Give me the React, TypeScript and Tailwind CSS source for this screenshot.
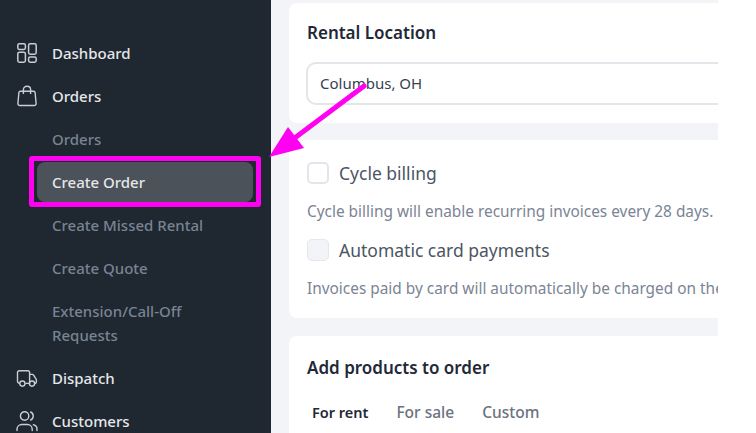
const font = { fontFamily: '"Noto Sans", "Liberation Sans", sans-serif' }

function DashboardIcon() {
  return (
    <svg width="22" height="22" viewBox="0 0 22 22" fill="none" stroke="currentColor" strokeWidth="1.5">
      <rect x="1.8" y="1.8" width="7.6" height="5.6" rx="1.6" />
      <rect x="12.6" y="1.8" width="7.6" height="10.4" rx="1.6" />
      <rect x="1.8" y="10.2" width="7.6" height="10" rx="1.6" />
      <rect x="12.6" y="15" width="7.6" height="5.2" rx="1.6" />
    </svg>
  )
}

function BagIcon() {
  return (
    <svg width="22" height="22" viewBox="0 0 22 22" fill="none" stroke="currentColor" strokeWidth="1.4" strokeLinejoin="round">
      <path d="M4.400 6.200h13.200c.8 0 1.400.6 1.500 1.300l1 11c.1 1-.7 2-1.800 2H3.700c-1.100 0-1.900-1-1.800-2l1-11c.1-.7.7-1.300 1.500-1.300z" />
      <path d="M7.400 9V4.600C7.400 2.600 9 1.200 11 1.200s3.600 1.400 3.600 3.400V9" />
    </svg>
  )
}

function TruckIcon() {
  return (
    <svg width="22" height="22" viewBox="0 0 22 22" fill="none" stroke="currentColor" strokeWidth="1.4" strokeLinejoin="round">
      <path d="M3.600 16.400C2.400 16.200 1.500 15.200 1.500 14V5.600c0-1 .8-1.800 1.800-1.800h8.500c1 0 1.800.8 1.800 1.800v10.800H9.400" />
      <path d="M13.600 7.400h2.600c.6 0 1.100.3 1.400.8l2.500 4c.2.3.3.6.3 1v1.600c0 1.200-.8 1.800-1.800 2" />
      <circle cx="6.400" cy="16.600" r="2.600" />
      <circle cx="16" cy="16.600" r="2.600" />
    </svg>
  )
}

function UsersIcon() {
  return (
    <svg width="22" height="22" viewBox="0 0 22 22" fill="none" stroke="currentColor" strokeWidth="1.4" strokeLinecap="round">
      <circle cx="8.600" cy="6" r="4.200" />
      <path d="M14.600 2c1.600.6 2.600 2.200 2.600 4s-1 3.400-2.600 4" />
      <path d="M1 20.600v-1.400c0-2.600 2.100-4.700 4.700-4.700h5.800c2.600 0 4.700 2.100 4.700 4.700v1.400" />
      <path d="M17.400 14.800c2.100.5 3.600 2.300 3.600 4.400v1.400" />
    </svg>
  )
}

function MainItem({ icon, label }: { icon: React.ReactNode; label: string }) {
  return (
    <div className="flex h-10 shrink-0 items-center text-[15px] font-medium text-[#e5e7eb]">
      <span className="ml-[16px] w-[36px] text-[#c9ced6]">{icon}</span>
      {label}
    </div>
  )
}

function SubItem({ label, active }: { label: string; active?: boolean }) {
  return (
    <div
      className={
        active
          ? 'ml-[37px] flex h-10 w-[216px] shrink-0 items-center rounded-lg bg-[#4b5259] px-[15px] text-[15px] font-medium text-[#e5e7eb]'
          : 'ml-[37px] flex h-10 w-[216px] shrink-0 items-center px-[15px] text-[15px] font-medium text-[#788494]'
      }
    >
      {label}
    </div>
  )
}

export default function App() {
  return (
    <div style={font} className="relative flex h-[433px] w-[756px] overflow-hidden bg-white">
      <aside className="flex h-full w-[271px] shrink-0 flex-col gap-[3px] bg-[#1f2730] pt-[33px]">
        <MainItem icon={<DashboardIcon />} label="Dashboard" />
        <MainItem icon={<BagIcon />} label="Orders" />
        <SubItem label="Orders" />
        <SubItem label="Create Order" active />
        <SubItem label="Create Missed Rental" />
        <SubItem label="Create Quote" />
        <div className="ml-[37px] w-[216px] shrink-0 px-[15px] py-2 text-[15px] leading-6 font-medium text-[#788494]">
          Extension/Call-Off Requests
        </div>
        <MainItem icon={<TruckIcon />} label="Dispatch" />
        <MainItem icon={<UsersIcon />} label="Customers" />
      </aside>

      <main className="h-full w-[447px] shrink-0 overflow-hidden bg-[#f3f4f7] pt-[3px] pl-[18px]">
        <section className="w-[600px] rounded-lg bg-white px-[18px] pt-[18px] pb-[18px]">
          <h2 className="text-[17px] leading-6 font-semibold text-[#1f2937]">Rental Location</h2>
          <div className="mt-[17px] -ml-px flex h-[43px] items-center rounded-[10px] border-2 border-[#e2e5ea] px-3 text-[15px] text-[#374151]">
            Columbus, OH
          </div>
        </section>

        <section className="mt-[17px] w-[600px] rounded-lg bg-white px-[18px] pt-[22px] pb-[17px]">
          <div className="flex h-[22px] items-center gap-[10px]">
            <span className="size-[22px] rounded-[5px] border-2 border-[#e2e5ea] bg-white" />
            <span className="text-[17.5px] text-[#4b5563]">Cycle billing</span>
          </div>
          <p className="mt-4 text-[15.4px] leading-6 whitespace-nowrap text-[#7b8494]">
            Cycle billing will enable recurring invoices every 28 days.
          </p>
          <div className="mt-[15px] flex h-[22px] items-center gap-[10px]">
            <span className="size-[22px] rounded-[5px] border border-[#e5e7eb] bg-[#f3f4f7]" />
            <span className="text-[17.5px] text-[#4b5563]">Automatic card payments</span>
          </div>
          <p className="mt-4 text-[15.4px] leading-6 whitespace-nowrap text-[#7b8494]">
            Invoices paid by card will automatically be charged on the due date.
          </p>
        </section>

        <section className="mt-[18px] w-[600px] rounded-lg bg-white px-[18px] pt-5 pb-6">
          <h2 className="text-[17px] leading-6 font-semibold text-[#1f2937]">Add products to order</h2>
          <div className="mt-5 flex items-center gap-[28px] px-[5px] text-[15.5px] leading-6 font-medium text-[#6b7280]">
            <span className="text-[14.5px] font-semibold text-[#1f2937]">For rent</span>
            <span>For sale</span>
            <span>Custom</span>
          </div>
        </section>
      </main>

      {/* annotation drawn over the screenshot */}
      <div className="absolute top-[156px] left-[29px] h-[51px] w-[232px] rounded-[3px] border-[5px] border-[#ff00f0]" />
      <svg className="absolute top-0 left-0" width="756" height="433" fill="none">
        <path d="M364 86L296 137" stroke="#ff00f0" strokeWidth="5" strokeLinecap="round" />
        <path d="M269 157L288 127L304 148Z" fill="#ff00f0" />
      </svg>
    </div>
  )
}
